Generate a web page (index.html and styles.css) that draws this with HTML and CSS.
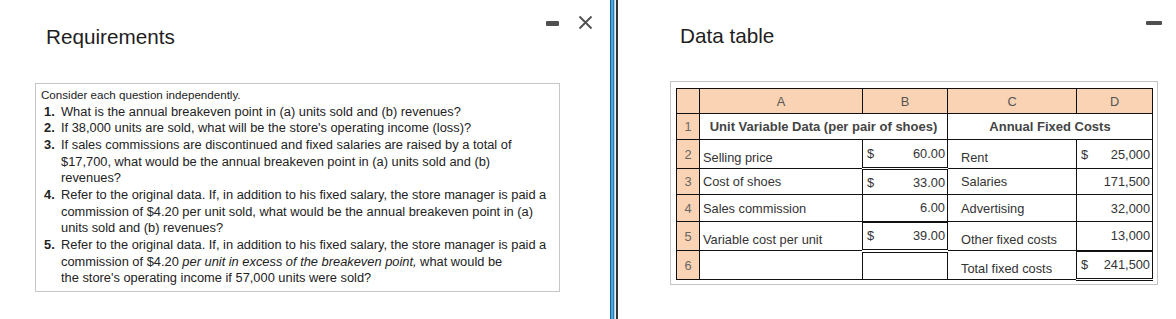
FILE: index.html
```html
<!DOCTYPE html>
<html lang="en">
<head>
    <meta charset="UTF-8">
    <meta name="viewport" content="width=device-width, initial-scale=1.0">
    <title>Requirements / Data table</title>
    <link rel="stylesheet" href="styles.css">
</head>
<body>
    <div class="panel left-panel">
        <div class="panel-head">
            <h2 class="panel-title req-title">Requirements</h2>
            <div class="panel-controls">
                <span class="minimize"></span>
                <svg class="close" width="15" height="15" viewBox="0 0 15 15">
                    <path d="M1.5 1.5 L13.5 13.5 M13.5 1.5 L1.5 13.5" stroke="#4d4d4d" stroke-width="1.8" fill="none"/>
                </svg>
            </div>
        </div>
        <div class="req-box">
            <p class="req-intro">Consider each question independently.</p>
            <ol class="req-list">
                <li><span class="num">1.</span><span>What is the annual breakeven point in (a) units sold and (b) revenues?</span></li>
                <li><span class="num">2.</span><span>If 38,000 units are sold, what will be the store's operating income (loss)?</span></li>
                <li><span class="num">3.</span><span>If sales commissions are discontinued and fixed salaries are raised by a total of<br>$17,700, what would be the annual breakeven point in (a) units sold and (b)<br>revenues?</span></li>
                <li><span class="num">4.</span><span>Refer to the original data. If, in addition to his fixed salary, the store manager is paid a<br>commission of $4.20 per unit sold, what would be the annual breakeven point in (a)<br>units sold and (b) revenues?</span></li>
                <li><span class="num">5.</span><span>Refer to the original data. If, in addition to his fixed salary, the store manager is paid a<br>commission of $4.20 <em>per unit in excess of the breakeven point,</em> what would be<br>the store's operating income if 57,000 units were sold?</span></li>
            </ol>
        </div>
    </div>

    <div class="divider"></div>

    <div class="panel right-panel">
        <div class="panel-head data-head">
            <h2 class="panel-title data-title">Data table</h2>
            <div class="panel-controls">
                <span class="minimize wide"></span>
            </div>
        </div>
        <div class="data-box">
            <table class="data-table">
                <colgroup>
                    <col class="c-num">
                    <col class="c-a">
                    <col class="c-b">
                    <col class="c-c">
                    <col class="c-d">
                </colgroup>
                <tr class="r-head">
                    <td class="rn"></td>
                    <td class="colhead">A</td>
                    <td class="colhead">B</td>
                    <td class="colhead">C</td>
                    <td class="colhead">D</td>
                </tr>
                <tr class="r1">
                    <td class="rn">1</td>
                    <td class="bold" colspan="2">Unit Variable Data (per pair of shoes)</td>
                    <td class="bold" colspan="2">Annual Fixed Costs</td>
                </tr>
                <tr class="r2 low">
                    <td class="rn">2</td>
                    <td class="label">Selling price</td>
                    <td class="money dbl-3"><span>$</span><span>60.00</span></td>
                    <td class="label indent">Rent</td>
                    <td class="money"><span>$</span><span>25,000</span></td>
                </tr>
                <tr class="r3">
                    <td class="rn">3</td>
                    <td class="label">Cost of shoes</td>
                    <td class="money"><span>$</span><span>33.00</span></td>
                    <td class="label indent">Salaries</td>
                    <td class="money"><span></span><span>171,500</span></td>
                </tr>
                <tr class="r4">
                    <td class="rn">4</td>
                    <td class="label">Sales commission</td>
                    <td class="money thick"><span></span><span>6.00</span></td>
                    <td class="label indent">Advertising</td>
                    <td class="money"><span></span><span>32,000</span></td>
                </tr>
                <tr class="r5 low">
                    <td class="rn">5</td>
                    <td class="label">Variable cost per unit</td>
                    <td class="money dbl-4"><span>$</span><span>39.00</span></td>
                    <td class="label indent">Other fixed costs</td>
                    <td class="money thick"><span></span><span>13,000</span></td>
                </tr>
                <tr class="r6 low">
                    <td class="rn">6</td>
                    <td class="label"></td>
                    <td class="money"></td>
                    <td class="label indent">Total fixed costs</td>
                    <td class="money dbl-3"><span>$</span><span>241,500</span></td>
                </tr>
            </table>
        </div>
    </div>
</body>
</html>
```

FILE: styles.css
```css
* {
    margin: 0;
    padding: 0;
    box-sizing: border-box;
}
body {
    width: 1176px;
    height: 319px;
    overflow: hidden;
    display: flex;
    flex-direction: row;
    background: #fff;
    font-family: "Liberation Sans", Arial, sans-serif;
    color: #222;
}

/* panels */
.panel {
    height: 100%;
    display: flex;
    flex-direction: column;
}
.left-panel {
    width: 608px;
}
.right-panel {
    flex: 1;
}
.panel-head {
    padding: 13px 15px 0 46px;
    display: flex;
    justify-content: space-between;
    align-items: flex-start;
}
.data-head {
    padding: 13px 14px 0 62px;
}
.panel-title {
    font-size: 20.7px;
    font-weight: 400;
    line-height: 24px;
    color: #1e1e1e;
}
.req-title {
    margin-top: 12px;
}
.data-title {
    margin-top: 11px;
}
.panel-controls {
    display: flex;
    align-items: flex-start;
    gap: 19px;
}
.minimize {
    display: block;
    margin-top: 8px;
    width: 13px;
    height: 5px;
    border-radius: 1px;
    background: #505050;
}
.minimize.wide {
    width: 16px;
    height: 4px;
}
.close {
    display: block;
    margin-top: 2px;
}

/* divider between the two windows */
.divider {
    width: 10px;
    height: 100%;
    background: linear-gradient(to right,
        #fff 0px, #fff 2px,
        #1d5f8e 2px, #1d5f8e 3px,
        #4fa6d8 3px, #4fa6d8 5px,
        #2b7db4 5px, #2b7db4 6px,
        #a9d3ec 6px, #a9d3ec 7px,
        #e9f3f9 7px, #e9f3f9 8px,
        #343434 8px, #343434 10px);
}

/* requirements box */
.req-box {
    margin: 34px 0 0 35px;
    width: 525px;
    height: 209px;
    border: 1px solid #c6c6c6;
    padding: 3px 5px 0 5px;
    color: #222;
    white-space: nowrap;
}
.req-intro {
    font-size: 11.6px;
    line-height: 16.6px;
}
.req-list {
    list-style: none;
    font-size: 12.85px;
    line-height: 16.65px;
}
.req-list li {
    display: flex;
    padding-left: 3px;
}
.req-list .num {
    width: 17px;
    flex-shrink: 0;
    font-weight: 700;
}
.req-list em {
    font-style: italic;
}

/* data table */
.data-box {
    margin: 33px 0 0 52px;
    width: 488px;
    height: 204px;
    border: 1px solid #c4c4c4;
    padding: 6px 5px 4px 5px;
}
.data-table {
    width: 476px;
    table-layout: fixed;
    border-collapse: collapse;
    font-size: 12.8px;
    color: #333;
}
.c-num { width: 23px; }
.c-a { width: 163px; }
.c-b { width: 85px; }
.c-c { width: 129px; }
.c-d { width: 76px; }

.data-table td {
    border: 1px solid #111;
    padding: 0 3px;
    white-space: nowrap;
    vertical-align: middle;
}
.r-head { height: 25px; }
.r1 { height: 26px; }
.r2 { height: 29px; }
.r3 { height: 26px; }
.r4 { height: 27px; }
.r5 { height: 29px; }
.r6 { height: 29px; }

.data-table td.rn {
    background: #f9d3b3;
    color: #666;
    text-align: center;
    padding: 0;
}
.data-table td.colhead {
    background: #f9d3b3;
    color: #555;
    text-align: center;
}
.data-table td.bold {
    font-size: 13px;
    font-weight: 700;
    color: #444;
    text-align: center;
}
.data-table td.indent {
    padding-left: 13px;
}
.low td.label {
    padding-top: 6px;
}
.data-table td.money span {
    display: inline-block;
}
.data-table td.money {
    padding: 0 2px 0 2px;
}
.money span:first-child {
    float: left;
    padding-left: 2px;
}
.money span:last-child {
    float: right;
}
.data-table td.dbl-3 {
    border-bottom: 3px double #111;
}
.data-table td.dbl-4 {
    border-bottom: 4px double #111;
}
.data-table td.thick {
    border-bottom: 2px solid #111;
}
```
